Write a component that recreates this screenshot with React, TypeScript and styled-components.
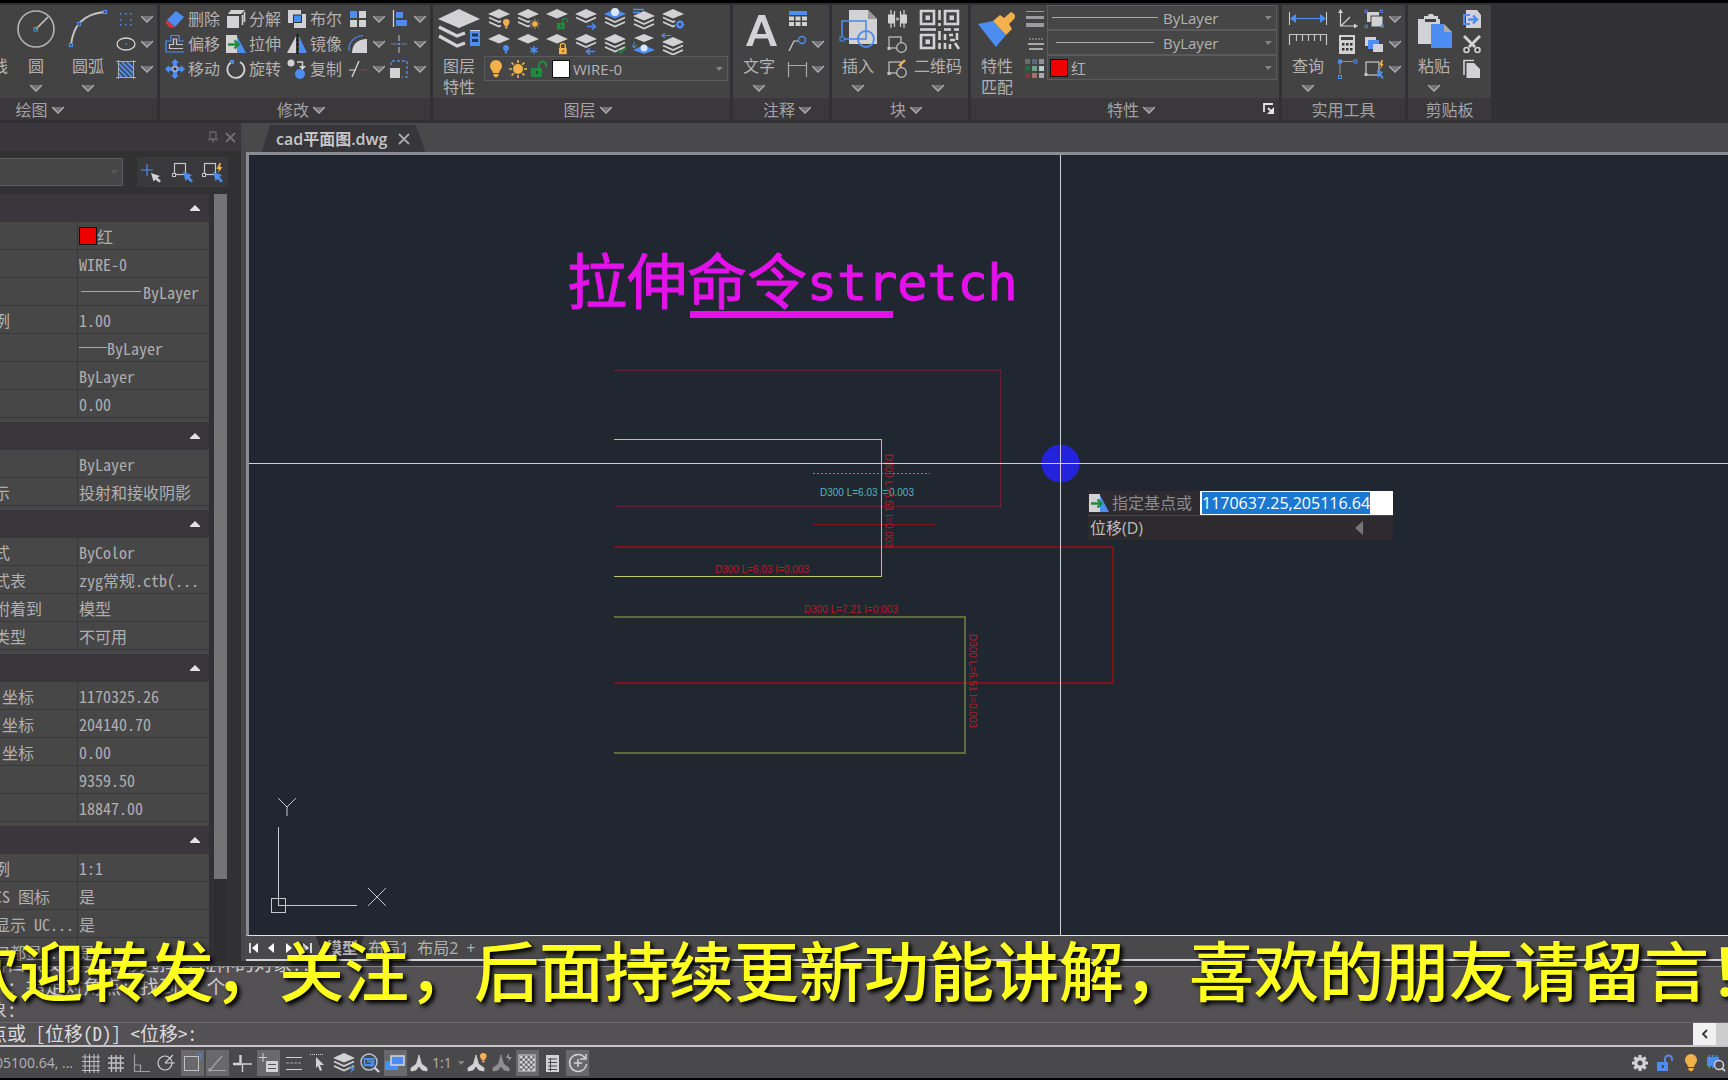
import React, { useEffect, useRef } from "react";
import styled, { createGlobalStyle, css } from "styled-components";

const W = "#d2d1d3";
const B = "#4b8df0";
const O = "#f3b14c";
const G = "#218a3c";
const UI = `"Open Sans", "Noto Sans CJK SC", sans-serif`;
const MONO = `"Noto Sans Mono CJK SC", "Noto Sans CJK SC", monospace`;

const GlobalStyle = createGlobalStyle`
  *, *::before, *::after { box-sizing: border-box; }
  body { margin: 0; background: #000; overflow: hidden; }
  button, select, input { font: inherit; color: inherit; }
`;

const Shell = styled.div`
  position: relative;
  display: flex;
  flex-direction: column;
  height: 100vh;
  overflow: hidden;
  border-top: 3px solid #000;
  border-bottom: 2px solid #000;
  background: #313134;
  color: #b3b2b3;
  font: 16px/20px ${UI};
`;

/* ---------- ribbon ---------- */

const Ribbon = styled.header`
  display: flex;
  gap: 3px;
  padding: 2px 0 3px;
  flex: none;
`;

const Panel = styled.section<{ $w: number; $cut?: number }>`
  display: flex;
  flex-direction: column;
  flex: none;
  width: ${(p) => p.$w}px;
  margin-left: ${(p) => -(p.$cut ?? 0)}px;
  background: #444344;
`;

const PanelBody = styled.div<{ $end?: boolean }>`
  display: flex;
  gap: 2px;
  height: 93px;
  padding: 1px ${(p) => (p.$end ? 4 : 2)}px 0 1px;
  justify-content: ${(p) => (p.$end ? "flex-end" : "flex-start")};
`;

const PanelTitle = styled.footer<{ $plain?: boolean }>`
  display: flex;
  align-items: center;
  justify-content: center;
  gap: 4px;
  height: 22px;
  padding: 2px 0 0 ${(p) => (p.$plain ? 0 : 12)}px;
  background: #3a383b;
  color: #a3a2a4;
  position: relative;
`;

const Launcher = styled.button`
  position: absolute;
  right: 4px;
  top: 5px;
  padding: 0;
  border: 0;
  background: none;
  display: flex;
`;

const bare = css`
  display: flex;
  align-items: center;
  padding: 0;
  border: 0;
  background: none;
  white-space: nowrap;
`;

const BigButton = styled.button`
  ${bare}
  flex: none;
  flex-direction: column;
  width: 50px;
  line-height: 21px;
  & > svg:first-child { margin-bottom: 6px; }
`;

const CaretSlot = styled.span`
  display: flex;
  align-items: center;
  height: 21px;
`;

const Column = styled.div`
  display: grid;
  grid-template-rows: repeat(3, 25px);
  align-content: start;
`;

const ModifyGrid = styled.div`
  display: grid;
  grid-template-columns: 61px 61px 61px 41px 41px;
  grid-template-rows: repeat(3, 25px);
  padding-left: 3px;
`;

const LabelButton = styled.button`
  ${bare}
  gap: 2px;
`;

const SplitButton = styled.button`
  ${bare}
  gap: 4px;
`;

const LayerBlock = styled.div`
  display: flex;
  flex-direction: column;
  flex: 1;
  margin-left: -2px;
`;

const LayerTools = styled.div`
  display: grid;
  grid-template-columns: repeat(7, 29px);
  grid-template-rows: 25px 25px;
  justify-items: center;
`;

const PropertyCombos = styled.div`
  display: flex;
  flex-direction: column;
  flex: 1;
  margin: -1px 0 0 -1px;
`;

const Combo = styled.label`
  display: flex;
  align-items: center;
  gap: 3px;
  height: 25px;
  padding: 0 4px 0 2px;
  border: 1px solid #5b5a5c;
  background: #474647;
`;

const Select = styled.select`
  appearance: none;
  flex: 1;
  min-width: 0;
  padding: 0;
  border: 0;
  background: none;
  outline: 0;
  font-size: 15px;
`;

const Swatch = styled.span<{ $c: string }>`
  flex: none;
  width: 18px;
  height: 18px;
  border: 1px solid #111;
  background: ${(p) => p.$c};
`;

const Rule = styled.span<{ $w: number; $m?: number }>`
  flex: none;
  width: ${(p) => p.$w}px;
  margin: 0 ${(p) => p.$m ?? 0}px;
  border-top: 1px solid #a9a9a9;
`;

/* ---------- palette ---------- */

const Main = styled.main`
  display: flex;
  flex: 1;
  min-height: 0;
`;

const Palette = styled.aside`
  display: flex;
  flex-direction: column;
  flex: none;
  width: 246px;
  border-right: 5px solid #48474a;
  overflow: hidden;
`;

const PaletteTitle = styled.div`
  display: flex;
  flex: none;
  align-items: center;
  justify-content: flex-end;
  gap: 4px;
  height: 28px;
  padding-right: 4px;
  background: #39373b;
`;

const IconButton = styled.button<{ $w?: number }>`
  ${bare}
  justify-content: center;
  width: ${(p) => (p.$w ? `${p.$w}px` : "auto")};
`;

const PaletteHead = styled.div`
  display: flex;
  flex: none;
  align-items: center;
  justify-content: space-between;
  height: 43px;
  padding: 0 13px 2px 0;
`;

const ObjectCombo = styled(Combo)`
  width: 123px;
  height: 28px;
  border-left: 0;
  & > svg { opacity: 0.3; }
`;

const PickTools = styled.div`
  display: flex;
  width: 91px;
  height: 30px;
  background: #39383b;
`;

const PaletteScroll = styled.div`
  display: flex;
  flex: 1;
  min-height: 0;
  gap: 5px;
`;

const Groups = styled.div`
  width: 209px;
  overflow: hidden;
  font: 300 16px/20px ${MONO};
  color: #b0afb0;
`;

const Group = styled.section`
  padding-bottom: 4px;
  background: #484748;
`;

const Track = styled.div`
  width: 13px;
  background: #2d2c2f;
`;

const Thumb = styled.div`
  height: 90%;
  max-height: 685px;
  background: #747376;
`;

const GroupHead = styled.button`
  ${bare}
  justify-content: flex-end;
  width: 209px;
  height: 28px;
  padding-right: 9px;
  background: #39373b;
`;

const PropTable = styled.table`
  width: 267px;
  margin-left: -58px;
  table-layout: fixed;
  border-collapse: separate;
  border-spacing: 0;
`;

const Cell = styled.td<{ $w?: number }>`
  width: ${(p) => (p.$w ? `${p.$w}px` : "auto")};
  height: 28px;
  padding: 0 2px 0 ${(p) => (p.$w ? 3 : 1)}px;
  border-bottom: 1px solid #39383a;
  border-left: 1px solid #39383a;
  overflow: hidden;
  white-space: nowrap;
`;

const Value = styled.span`
  display: flex;
  align-items: center;
`;

/* ---------- document ---------- */

const Doc = styled.section`
  display: flex;
  flex-direction: column;
  flex: 1;
  min-width: 0;
`;

const DocTabs = styled.nav`
  display: flex;
  flex: none;
  height: 29px;
  padding: 2px 0 0 16px;
  background: #49484a;
`;

const DocTab = styled.div`
  display: flex;
  align-items: center;
  gap: 10px;
  padding: 0 8px 0 14px;
  background: #37363a;
  clip-path: polygon(8px 0, calc(100% - 10px) 0, 100% 100%, 0 100%);
  color: #c6c6c8;
  font-weight: 600;
`;

const Canvas = styled.div`
  position: relative;
  flex: 1;
  min-height: 0;
  border: solid #8c8d92;
  border-width: 3px 0 1px 3px;
  border-bottom-color: #e4e4e8;
  background: #202731;
  overflow: hidden;
`;

const Drawing = styled.svg`
  display: block;
  width: 100%;
  height: 100%;
`;

const DynamicInput = styled.div`
  position: absolute;
  left: 839px;
  top: 336px;
  width: 305px;
  background: #2d2b2f;
`;

const PromptRow = styled.label`
  display: flex;
  align-items: center;
  gap: 2px;
  height: 24px;
  color: #8b8a8d;
`;

const PromptText = styled.span`
  flex: 1;
`;

const PointInput = styled.input`
  width: 193px;
  height: 24px;
  padding: 0 1px;
  border: 1px solid #fff;
  background: #fff;
  color: #111;
  outline: 0;
  &::selection { background: #1c77d0; color: #fff; }
`;

const OptionRow = styled.button`
  ${bare}
  justify-content: space-between;
  width: 100%;
  height: 25px;
  padding: 0 30px 0 2px;
  border-top: 1px solid #48464a;
  color: #bcbbbd;
`;

const LayoutTabs = styled.nav`
  display: flex;
  flex: none;
  align-items: center;
  height: 25px;
  border-bottom: 2px solid #d4d4d8;
  background: #49484a;
`;

const LayoutTab = styled.button<{ $on?: boolean }>`
  ${bare}
  height: 23px;
  padding: ${(p) => (p.$on ? "0 6px 0 10px" : "0 4px")};
  background: ${(p) => (p.$on ? "#2d2c30" : "none")};
  clip-path: ${(p) => (p.$on ? "polygon(0 0, 100% 0, calc(100% - 8px) 100%, 8px 100%)" : "none")};
  font-weight: ${(p) => (p.$on ? 700 : 400)};
`;

/* ---------- command line, status ---------- */

const CommandLog = styled.section`
  display: flex;
  flex: none;
  flex-direction: column;
  justify-content: flex-end;
  height: 56px;
  margin-top: 5px;
  padding-bottom: 2px;
  border-top: 1px solid #8a898b;
  background: #535154;
  overflow: hidden;
  font: 300 19px/23px ${MONO};
  color: #cfcecf;
`;

const LogLine = styled.p`
  flex: none;
  margin: 0 0 0 -69px;
  white-space: pre;
`;

const CommandRow = styled.div`
  display: flex;
  flex: none;
  justify-content: space-between;
  height: 25px;
  border-top: 1px solid #6a686b;
  border-bottom: 2px solid #c6c5c8;
  background: #535154;
  overflow: hidden;
  font: 400 19px/20px ${MONO};
  color: #dcdbdc;
`;

const ScrollEnd = styled.div`
  display: flex;
  width: 35px;
  background: #cdcdcd;
`;

const ScrollButton = styled.button`
  ${bare}
  justify-content: center;
  width: 23px;
  background: #f1f1f1;
`;

const StatusBar = styled.footer`
  display: flex;
  flex: none;
  align-items: center;
  height: 31px;
  background: #49484a;
  overflow: hidden;
`;

const Coordinates = styled.span`
  display: flex;
  flex: none;
  justify-content: flex-end;
  width: 73px;
  margin-right: 6px;
  font-size: 14px;
  white-space: nowrap;
`;

const ToggleGroup = styled.div<{ $w: number }>`
  display: flex;
  flex: none;
  justify-content: space-between;
  width: ${(p) => p.$w}px;
`;

const Toggle = styled.button<{ $on?: boolean }>`
  ${bare}
  justify-content: center;
  width: 23px;
  height: 26px;
  background: ${(p) => (p.$on ? "#69686b" : "none")};
`;

const ScaleButton = styled.button`
  ${bare}
  gap: 5px;
  width: 33px;
  font-size: 14px;
`;

const StatusRight = styled.div`
  display: flex;
  justify-content: space-between;
  width: 100px;
  margin-left: auto;
`;

const Caption = styled.div`
  position: absolute;
  left: 0;
  right: 0;
  bottom: 65px;
  display: flex;
  justify-content: center;
  color: #ffff20;
  font: 500 65px/90px "Noto Sans CJK SC", sans-serif;
  text-shadow: 3px 3px 4px #000, 1px 1px 2px #222200;
  white-space: nowrap;
  pointer-events: none;
`;

/* ---------- icons ---------- */

type IcoProps = { w?: number; h?: number; children: React.ReactNode };
const IcoSvg = styled.svg`
  flex-shrink: 0;
`;
const Ico = ({ w = 22, h = 22, children }: IcoProps) => (
  <IcoSvg width={w} height={h} viewBox={`0 0 ${w} ${h}`} fill="none" stroke="none" aria-hidden="true">
    {children}
  </IcoSvg>
);

const Caret = () => (
  <Ico w={12} h={8}>
    <path d="M1 1H11L6 7Z" fill="#737274" />
    <path d="M0 1L6 7L12 1" stroke="#aeadaf" strokeWidth="1.3" />
  </Ico>
);

const MiniCaret = () => (
  <Ico w={8} h={5}>
    <path d="M1 1H8L4 5Z" fill="#858487" />
  </Ico>
);

const Bulb = ({ x, y, s = 1, c = O }: { x: number; y: number; s?: number; c?: string }) => (
  <g transform={`translate(${x} ${y}) scale(${s})`} fill={c}>
    <path d="M6 0a6 6 0 0 1 6 6c0 3-2.500 4-3 7H3C2.500 10 0 9 0 6a6 6 0 0 1 6-6Z" />
    <path d="M3.500 14h5v2l-2.500 1.500L3.500 16Z" />
  </g>
);

const Sun = ({ x, y, s = 1, c = O }: { x: number; y: number; s?: number; c?: string }) => (
  <g transform={`translate(${x} ${y}) scale(${s})`}>
    <circle cx="9" cy="9" r="5" fill={c} />
    <path d="M9 0v3M9 15v3M0 9h3M15 9h3M2.600 2.600l2.200 2.200M13.200 13.200l2.200 2.200M15.400 2.600l-2.200 2.200M4.800 13.200l-2.200 2.200" stroke={c} strokeWidth="1.600" />
  </g>
);

const Lock = ({ x, y, s = 1, c = G, open = true }: { x: number; y: number; s?: number; c?: string; open?: boolean }) => (
  <g transform={`translate(${x} ${y}) scale(${s})`}>
    <rect x="0" y="7" width="11" height="9" fill={c} />
    <path d={open ? "M8 7V4a3.500 3.500 0 0 1 7 0v2" : "M2 7V4a3.500 3.500 0 0 1 7 0v3"} stroke={c} strokeWidth="2" fill="none" />
    <rect x="5" y="10" width="1.500" height="3" fill="#333" />
  </g>
);

const Layers = ({ n = 2, top = W, dy = 0, children }: { n?: number; top?: string; dy?: number; children?: React.ReactNode }) => (
  <Ico w={24} h={22}>
    <g transform={`translate(0 ${dy})`}>
      <path d="M12 1L23 6L12 10.500L1 6Z" fill={top} />
      {n > 0 && <path d="M2 9.500L12 14L22 9.500" stroke={W} strokeWidth="1.800" />}
      {n > 1 && <path d="M2 14L12 18.500L22 14" stroke={W} strokeWidth="1.800" />}
    </g>
    {children}
  </Ico>
);

const HalfLayers = ({ children }: { children: React.ReactNode }) => (
  <Ico w={24} h={22}>
    <path d="M12 1L23 6L12 10.500L1 6Z" fill={W} />
    <path d="M2 9.500L12 14L14 13M2 14L12 18.500L14 17.500" stroke={W} strokeWidth="1.800" />
    {children}
  </Ico>
);

const CircleIcon = () => (
  <Ico w={44} h={44}>
    <circle cx="22" cy="23" r="18" stroke="#b5b4b6" strokeWidth="1.600" />
    <path d="M22 23L34 11" stroke="#c5c4c6" strokeWidth="1.600" />
    <rect x="20" y="21.500" width="3.500" height="3.500" stroke={B} />
  </Ico>
);

const ArcIcon = () => (
  <Ico w={44} h={44}>
    <path d="M5 39Q8 9 38 6" stroke="#c5c4c6" strokeWidth="1.800" />
    <g stroke={B} strokeWidth="1.200" fill="#444344">
      <rect x="3.500" y="37.500" width="3" height="3" />
      <rect x="11.500" y="16.500" width="3" height="3" />
      <rect x="37.500" y="4.500" width="3" height="3" />
    </g>
  </Ico>
);

const PolylineIcon = () => (
  <Ico w={44} h={44}>
    <path d="M4 9H23A14 14 0 0 1 23 37" stroke="#b5b4b6" strokeWidth="1.600" />
  </Ico>
);

const PointsIcon = () => (
  <Ico>
    <g fill={B}>
      {[5, 10, 15].map((x) => [5, 16].map((y) => <rect key={`${x}-${y}`} x={x} y={y} width="1.500" height="1.500" />))}
      <rect x="5" y="11" width="1.500" height="1.500" />
      <rect x="15" y="11" width="1.500" height="1.500" />
    </g>
  </Ico>
);

const EllipseIcon = () => (
  <Ico>
    <ellipse cx="11" cy="11" rx="9" ry="6" stroke={W} strokeWidth="1.300" />
    <rect x="10.500" y="10" width="1.500" height="1.500" fill={B} />
  </Ico>
);

const HatchIcon = () => (
  <Ico>
    <path d="M3 10L12 19M3 5L17 19M7 4L19 16M12 4L19 11M3 15L7 19" stroke={B} strokeWidth="2" />
    <path d="M1 3.500H21M1 19.500H21M3.500 2V21M18.500 2V21" stroke="#aaa" strokeWidth="1" />
  </Ico>
);

const EraseIcon = () => (
  <Ico>
    <path d="M3 12L12 3L20 9L11 19Z" fill={B} />
    <path d="M3 12L1.500 15L6 20L11 19Z" fill="#d3324b" />
  </Ico>
);

const BoxIcon = () => (
  <Ico>
    <path d="M2 8H14V20H2ZM6 2H20L16 6H3Z" fill={W} />
    <path d="M17.500 7V17M19.500 4V14" stroke={W} strokeWidth="1.600" />
  </Ico>
);

const UnionIcon = () => (
  <Ico>
    <path d="M2 2H15V6H20V20H8V15H2Z" fill={W} />
    <rect x="7.500" y="7" width="8" height="7.500" fill={B} stroke="#333" />
  </Ico>
);

const ArrayIcon = () => (
  <Ico>
    <path d="M3 3h7v7H3Z" fill={B} />
    <path d="M12 3h7v7h-7ZM12 12h7v7h-7ZM3 12h7v7H3Z" fill={W} />
  </Ico>
);

const AlignIcon = () => (
  <Ico>
    <path d="M5.500 2V19" stroke={W} strokeWidth="1.300" />
    <path d="M8 4h7v6H8ZM8 12h11v6H8Z" fill={B} />
  </Ico>
);

const OffsetIcon = () => (
  <Ico>
    <path d="M20 19H2V8H7V2.500H15V8H20" stroke={B} strokeWidth="1.200" />
    <path d="M19 15.500H5.500V11.500H9.500V6H12.500V11.500H19" stroke="#c9c8ca" strokeWidth="1.200" />
  </Ico>
);

const StretchIcon = () => (
  <Ico>
    <path d="M1 2H12V20H1Z" fill={W} />
    <path d="M12 3L21 20H12Z" fill={B} />
    <path d="M3 11.500H12M9.500 7.500L13.500 11.500L9.500 15.500" stroke={G} strokeWidth="2.400" />
  </Ico>
);

const MirrorIcon = () => (
  <Ico>
    <path d="M10 3V20H1Z" fill={W} />
    <path d="M13 3V20H21Z" fill={B} />
    <path d="M11.500 1V21" stroke="#111" strokeWidth="1.400" strokeDasharray="3 1.500" />
  </Ico>
);

const FilletIcon = () => (
  <Ico>
    <path d="M5 20C5 11 11 6 20 6V20Z" fill={W} />
    <path d="M2 18C1 9 8 3 16 2.500" stroke={B} strokeWidth="1.200" />
  </Ico>
);

const BreakIcon = () => (
  <Ico>
    <path d="M11 2V8M11 14V20" stroke="#9a9ea8" strokeWidth="1.400" />
    <path d="M3 11H9M13 11H19" stroke="#6a7d9f" strokeWidth="1" />
    <circle cx="11" cy="11" r="1.300" fill={B} />
  </Ico>
);

const MoveIcon = () => (
  <Ico>
    <path d="M11 1L15 5H13V9H17V7L21 11L17 15V13H13V17H15L11 21L7 17H9V13H5V15L1 11L5 7V9H9V5H7Z" fill={B} />
    <rect x="9" y="9" width="4" height="4" fill="#333" stroke={W} />
  </Ico>
);

const RotateIcon = () => (
  <Ico>
    <path d="M15 4A8.500 8.500 0 1 1 6 4.500" stroke={W} strokeWidth="1.800" />
    <path d="M4 2H9V7Z" fill={B} />
  </Ico>
);

const CopyIcon = () => (
  <Ico>
    <circle cx="5" cy="5" r="3.500" fill={W} />
    <path d="M11 4H16.500V9" stroke={W} strokeWidth="1.400" />
    <circle cx="14" cy="16" r="5" fill={B} />
    <path d="M13 8H20L16.500 12Z" fill={W} />
  </Ico>
);

const TrimIcon = () => (
  <Ico>
    <path d="M5 19L12 3" stroke={W} strokeWidth="1.400" />
    <path d="M2 12H9" stroke={W} />
    <path d="M12 12H20" stroke="#7a4a4e" />
  </Ico>
);

const ScaleIcon = () => (
  <Ico>
    <rect x="2" y="10" width="10" height="10" fill={W} />
    <path d="M3 7V3H19V19H14" stroke={B} strokeWidth="1.400" strokeDasharray="3 2" />
  </Ico>
);

const BigLayersIcon = () => (
  <Ico w={44} h={44}>
    <path d="M22 3L43 13L22 22L1 13Z" fill={W} />
    <path d="M2 21L20 30L28 27M2 30L20 40L28 37" stroke={W} strokeWidth="3.400" />
    <rect x="33" y="24" width="10" height="16" fill={B} />
    <path d="M35 29h6M35 34.500h6" stroke="#22345a" strokeWidth="3" />
    <path d="M33 24.500h10" stroke={W} />
  </Ico>
);

const TextIcon = () => (
  <Ico w={44} h={44}>
    <path fillRule="evenodd" d="M21.500 9H28L40 40H33.500L30.900 32.500H18L15.400 40H9ZM24.500 15.500L19.800 28H29.200Z" fill={W} />
  </Ico>
);

const TableIcon = () => (
  <Ico>
    <rect x="2" y="3" width="18" height="4" fill={B} />
    <path d="M2 8.500h5v4H2ZM8.500 8.500h5v4h-5ZM15 8.500h5v4h-5ZM2 14h5v4H2ZM8.500 14h5v4h-5ZM15 14h5v4h-5Z" fill={W} />
  </Ico>
);

const LeaderIcon = () => (
  <Ico>
    <path d="M3 18L8 8H13" stroke={W} strokeWidth="1.200" />
    <circle cx="16" cy="7" r="3.500" stroke={B} strokeWidth="1.400" />
  </Ico>
);

const DimIcon = () => (
  <Ico>
    <path d="M2.500 4V19M20.500 4V19M3 7.500H20" stroke="#a9a8aa" strokeWidth="1.200" />
  </Ico>
);

const InsertIcon = () => (
  <Ico w={44} h={44}>
    <path d="M13 4H32L41 13V38H13Z" fill={W} />
    <path d="M32 4V13H41Z" fill="#9a999b" />
    <rect x="6" y="15" width="24" height="18" stroke={B} strokeWidth="1.600" />
    <circle cx="30" cy="33" r="8" stroke={B} strokeWidth="1.800" />
    <rect x="4" y="31" width="4" height="4" fill="#444" stroke={B} />
  </Ico>
);

const BlockFlipIcon = () => (
  <Ico>
    <path d="M1 6.500h6v9H1ZM14 6.500h6v9h-6Z" fill={W} />
    <path d="M4 2V20M17 2V20M7.500 3V19M13.500 3V19" stroke={W} strokeWidth="1.200" />
    <path d="M9.500 9L12.500 11L9.500 13Z" fill={W} />
  </Ico>
);

const BlockIcon = ({ edit }: { edit?: boolean }) => (
  <Ico>
    <rect x="2" y="4" width="12" height="11" stroke="#c4c3c5" strokeWidth="1.200" />
    <circle cx="14.500" cy="14.500" r="4.800" stroke="#c4c3c5" strokeWidth="1.200" fill="#444344" />
    <rect x=".5" y="14" width="3" height="3" fill="#c4c3c5" />
    {edit && <path d="M12 8L18 2" stroke={O} strokeWidth="2.400" />}
  </Ico>
);

const QrIcon = () => (
  <Ico w={44} h={44}>
    <path d="M5 5h13v13H5ZM29 5h13v13H29ZM5 29h13v13H5Z" stroke={W} strokeWidth="2.600" />
    <path d="M9.500 9.500h4.500v4.500H9.500ZM33.500 9.500h4.500v4.500h-4.500ZM9.500 33.500h4.500v4.500H9.500Z" fill={W} />
    <path d="M23.500 4V14M23.500 17v3M4 23.500H20M23.500 25v9M23.500 37v6M28 23.500h7M38 23.500h5M29 28v6M33 29h4M41 27v7M34 34h5M29 37v6M34 38v5M39 37l4 6" stroke={W} strokeWidth="2.600" />
  </Ico>
);

const BrushIcon = () => (
  <Ico w={44} h={44}>
    <path d="M3 18L18 15L31 29L21 41Z" fill={B} />
    <path d="M18 15L25 9L29 12L36 6C40 8 41 10 39 13L34 18L37 23L31 29Z" fill={O} />
  </Ico>
);

const WeightIcon = () => (
  <Ico>
    <path d="M2 3.500H20" stroke="#9b9a9c" />
    <path d="M2 9.500H20" stroke="#9b9a9c" strokeWidth="3" />
    <path d="M2 17H20" stroke="#9b9a9c" strokeWidth="4" />
  </Ico>
);

const LinetypeIcon = () => (
  <Ico>
    <path d="M5 6H19" stroke="#a9a8aa" strokeDasharray="2 1" />
    <path d="M4 11H20M5 16H19" stroke="#a9a8aa" strokeWidth="2" />
  </Ico>
);

const ColorsIcon = () => (
  <Ico>
    {["#6b6b70", "#566a7d", "#8f9296", "#286a43", "#67a489", "#b7cfc8", "#7c3a40", "#a5716f", "#a8a7a9"].map((c, i) => (
      <rect key={i} x={1 + (i % 3) * 7} y={1 + Math.floor(i / 3) * 7} width="5" height="5" fill={c} />
    ))}
  </Ico>
);

const MeasureIcon = () => (
  <Ico w={44} h={44}>
    <path d="M3.500 6V19M40.500 6V19" stroke={W} />
    <path d="M6 12.500H38" stroke={B} strokeWidth="1.200" />
    <path d="M4 12.500L10 8V17ZM40 12.500L34 8V17Z" fill={B} />
    <path d="M3.500 39V28.500H40.500V39M10.500 28V35M16.500 28V35M22.500 28V35M28.500 28V35M34.500 28V35" stroke="#c4c3c5" strokeWidth="1.200" />
  </Ico>
);

const AxesIcon = () => (
  <Ico>
    <path d="M3.500 5V18H17M4 18L13 9" stroke={W} strokeWidth="1.200" />
    <path d="M3.500 1L6 5H1ZM21 18L17 15.500V20.500Z" fill={W} />
  </Ico>
);

const CalcIcon = () => (
  <Ico>
    <path fillRule="evenodd" d="M2 2H18V21H2ZM4 4V7H16V4Z" fill={W} />
    <path d="M5 10h2.500v2.500H5ZM9 10h2.500v2.500H9ZM13 10h2.500v2.500H13ZM5 15h2.500v2.500H5ZM9 15h2.500v2.500H9ZM13 15h2.500v2.500H13Z" fill="#333" />
  </Ico>
);

const ElbowIcon = () => (
  <Ico>
    <path d="M3 16V3.500H16" stroke="#8e8d90" />
    <rect x="1" y="1.500" width="4" height="4" fill={B} />
    <rect x="1.500" y="17.500" width="3" height="3" stroke={B} />
    <rect x="17" y="2" width="3" height="3" stroke={B} />
  </Ico>
);

const GroupIcon = () => (
  <Ico>
    <rect x="4" y="4" width="12" height="10" fill={W} />
    <rect x="8" y="8" width="12" height="11" fill={W} stroke="#444344" />
    <path d="M2 2h2.500v2.500H2ZM17 2h2.500v2.500H17ZM2 17h2.500v2.500H2ZM18 17h2.500v2.500H18Z" stroke={B} strokeWidth=".8" />
  </Ico>
);

const OrderIcon = () => (
  <Ico>
    <rect x="2" y="4" width="11" height="9" fill={W} />
    <rect x="5" y="7" width="11" height="9" fill={B} />
    <rect x="10" y="11" width="10" height="8" fill={W} />
  </Ico>
);

const FilterPickIcon = () => (
  <Ico>
    <rect x="3" y="4" width="13" height="13" stroke="#c6c5c7" strokeWidth="1.200" />
    <rect x="1.500" y="15" width="3" height="3" fill="#c6c5c7" />
    <path d="M14 12L20 14L18.500 16L20.500 20L19 21L17 18L15 20Z" fill={B} />
    <path d="M18.500 2L16.500 7H18L17.500 11L20.500 6H19L20 2Z" fill={O} />
  </Ico>
);

const QuickPickIcon = ({ bolt = true }: { bolt?: boolean }) => (
  <Ico>
    <rect x="3.500" y="2.500" width="11" height="11" stroke="#c6c5c7" strokeWidth="1.200" />
    <rect x="1.500" y="12.500" width="3" height="3" stroke="#c6c5c7" fill="#39383b" />
    <path d="M12 11L21 14L18.500 16L22 20L20 21.500L16.500 18L14.500 20Z" fill={B} />
    {bolt && <path d="M18.500 2L15.500 8H18L17 12L21.500 6H19L20 2Z" fill={O} />}
  </Ico>
);

const CrossPickIcon = () => (
  <Ico>
    <path d="M6 3V15M0 9H12" stroke={B} strokeWidth="1.200" />
    <path d="M10 12L19 15L16.500 16.500L20 20L18 21.500L14.500 18.500L12.500 20.500Z" fill={W} />
  </Ico>
);

const PasteIcon = () => (
  <Ico w={44} h={44}>
    <path d="M6 13H13V16H24V13H28V38H6Z" fill={W} />
    <path d="M12 10H16C16 7 22 7 22 10H26V13H12Z" fill={W} />
    <path d="M19 18H32L40 26V42H19Z" fill={B} />
    <path d="M32 18L40 26H32Z" fill="#aaa" />
  </Ico>
);

const CutoutIcon = () => (
  <Ico>
    <path d="M3 2H14L18 7V20H3Z" fill={W} />
    <path d="M0 7H7M0 16H7M1 7V16" stroke={B} strokeWidth="2" />
    <path d="M5 11.500H13M10 7.500L14 11.500L10 15.500" stroke={B} strokeWidth="2.400" />
  </Ico>
);

const ScissorsIcon = () => (
  <Ico>
    <path d="M1 3L12 14M17 3L6 14" stroke={W} strokeWidth="3" />
    <circle cx="3.500" cy="17" r="2.500" stroke={W} strokeWidth="1.600" />
    <circle cx="14.500" cy="17" r="2.500" stroke={W} strokeWidth="1.600" />
  </Ico>
);

const PagesIcon = () => (
  <Ico>
    <path d="M1 17V2.500H11" stroke={W} strokeWidth="1.600" />
    <path d="M3.500 5H11L17 11V20H3.500Z" fill={W} />
  </Ico>
);

const Gear = () => (
  <Ico w={18} h={18}>
    <path d="M9 1v16M1 9h16M3.400 3.400l11.200 11.200M14.600 3.400L3.400 14.600" stroke={W} strokeWidth="3.200" />
    <circle cx="9" cy="9" r="6" fill={W} />
    <circle cx="9" cy="9" r="2.500" fill="#49484a" />
  </Ico>
);

const Person = ({ c = W }: { c?: string }) => (
  <path d="M10 3L12.500 12L18 16V19L13 18L10 14L7 18L2 19V16L7.500 12Z" fill={c} stroke={c} strokeWidth=".8" />
);

/* ---------- content ---------- */

const layerTools: [string, React.ReactNode][] = [
  ["关闭图层", <HalfLayers><Bulb x={16} y={11} s={0.55} /></HalfLayers>],
  ["冻结图层", <HalfLayers><Sun x={14} y={11} s={0.55} /></HalfLayers>],
  ["解锁图层", <Layers n={0}><Lock x={12} y={10} s={0.7} /></Layers>],
  ["匹配图层", <Layers n={1}><path d="M13 18.500H21M18 15.500L21.500 18.500L18 21.500" stroke={B} strokeWidth="1.600" /></Layers>],
  ["置为当前", <Layers top={B}><circle cx="12" cy="4" r="4" fill="#dbe8fb" /></Layers>],
  ["图层状态", <Layers dy={2}><path d="M1 1.500H12M1 4.500H8" stroke={B} strokeWidth="1.400" /></Layers>],
  ["图层设置", <HalfLayers><circle cx="19" cy="16.500" r="2.700" stroke={B} strokeWidth="2" /><path d="M19 12v9M14.500 16.500h9M16 13.500l6 6M22 13.500l-6 6" stroke={B} strokeWidth="1.200" /><circle cx="19" cy="16.500" r="1.400" fill="#444344" /></HalfLayers>],
  ["打开图层", <Layers n={0}><Bulb x={16} y={12} s={0.5} c={B} /></Layers>],
  ["解冻图层", <Layers n={0}><path d="M18 13v8M14.500 15l7 4M21.500 15l-7 4" stroke={B} strokeWidth="1.500" /></Layers>],
  ["锁定图层", <Layers n={0}><Lock x={14} y={10} s={0.7} c={O} open={false} /></Layers>],
  ["上一图层", <Layers n={1}><path d="M13 18.500H21M16 15.500L12.500 18.500L16 21.500" stroke={B} strokeWidth="1.600" /></Layers>],
  ["图层漫游", <Layers><path d="M15 17L18 20L23 14" stroke={G} strokeWidth="1.600" /></Layers>],
  ["更改图层", <Ico w={24} h={22}><path d="M12 1L22 5L12 9L2 5Z" fill={W} /><path d="M12 12L23 17L12 21L1 17Z" fill={B} /><circle cx="12" cy="15" r="3.500" fill="#dbe8fb" /><path d="M2 9V14M0 12L2 15L5 12" stroke={B} /></Ico>],
  ["合并图层", <Layers dy={3}><path d="M1 2.500H10M4 0L1 2.500L4 5" stroke={B} strokeWidth="1.200" /></Layers>],
];

type Row = [string, React.ReactNode];
const groups: [string, Row[]][] = [
  ["常规", [
    ["颜色", <Value><Swatch $c="#ee0000" />红</Value>],
    ["图层", "WIRE-0"],
    ["线型", <Value><Rule $w={60} $m={2} />ByLayer</Value>],
    ["线型比例", "1.00"],
    ["线宽", <Value><Rule $w={28} />ByLayer</Value>],
    ["透明度", "ByLayer"],
    ["厚度", "0.00"],
  ]],
  ["三维效果", [["材质", "ByLayer"], ["阴影显示", "投射和接收阴影"]]],
  ["打印样式", [["打印样式", "ByColor"], ["打印样式表", "zyg常规.ctb(..."], ["打印表附着到", "模型"], ["打印表类型", "不可用"]]],
  ["视图", [["圆心 X 坐标", "1170325.26"], ["圆心 Y 坐标", "204140.70"], ["圆心 Z 坐标", "0.00"], ["高度", "9359.50"], ["宽度", "18847.00"]]],
  ["其他", [["注释比例", "1:1"], ["打开 UCS 图标", "是"], ["在原点显示 UC...", "是"], ["每个视口都显...", "是"]]],
];

const Split = ({ label, children }: { label: string; children: React.ReactNode }) => (
  <SplitButton aria-label={label}>{children}<Caret /></SplitButton>
);

const Big = ({ icon, label, second }: { icon: React.ReactNode; label: string; second?: string }) => (
  <BigButton>
    {icon}
    <span>{label}</span>
    {second ? <span>{second}</span> : <CaretSlot><Caret /></CaretSlot>}
  </BigButton>
);

function RibbonBar() {
  return (
    <Ribbon>
      <Panel $w={247} $cut={90}>
        <PanelBody $end>
          <Big icon={<PolylineIcon />} label="多段线" />
          <Big icon={<CircleIcon />} label="圆" />
          <Big icon={<ArcIcon />} label="圆弧" />
          <Column>
            <Split label="点"><PointsIcon /></Split>
            <Split label="椭圆"><EllipseIcon /></Split>
            <Split label="填充"><HatchIcon /></Split>
          </Column>
        </PanelBody>
        <PanelTitle>绘图<Caret /></PanelTitle>
      </Panel>

      <Panel $w={270}>
        <PanelBody>
          <ModifyGrid>
            <LabelButton><EraseIcon />删除</LabelButton>
            <LabelButton><BoxIcon />分解</LabelButton>
            <LabelButton><UnionIcon />布尔</LabelButton>
            <Split label="阵列"><ArrayIcon /></Split>
            <Split label="对齐"><AlignIcon /></Split>
            <LabelButton><OffsetIcon />偏移</LabelButton>
            <LabelButton><StretchIcon />拉伸</LabelButton>
            <LabelButton><MirrorIcon />镜像</LabelButton>
            <Split label="圆角"><FilletIcon /></Split>
            <Split label="打断"><BreakIcon /></Split>
            <LabelButton><MoveIcon />移动</LabelButton>
            <LabelButton><RotateIcon />旋转</LabelButton>
            <LabelButton><CopyIcon />复制</LabelButton>
            <Split label="修剪"><TrimIcon /></Split>
            <Split label="缩放"><ScaleIcon /></Split>
          </ModifyGrid>
        </PanelBody>
        <PanelTitle>修改<Caret /></PanelTitle>
      </Panel>

      <Panel $w={297}>
        <PanelBody>
          <Big icon={<BigLayersIcon />} label="图层" second="特性" />
          <LayerBlock>
            <LayerTools>
              {layerTools.map(([name, icon]) => <IconButton key={name} aria-label={name}>{icon}</IconButton>)}
            </LayerTools>
            <Combo>
              <Ico w={62} h={20}>
                <Bulb x={3} y={1} />
                <Sun x={22} y={1} />
                <Lock x={44} y={2} />
              </Ico>
              <Swatch $c="#fff" />
              <Select aria-label="当前图层"><option>WIRE-0</option></Select>
              <MiniCaret />
            </Combo>
          </LayerBlock>
        </PanelBody>
        <PanelTitle>图层<Caret /></PanelTitle>
      </Panel>

      <Panel $w={96}>
        <PanelBody>
          <Big icon={<TextIcon />} label="文字" />
          <Column>
            <IconButton $w={24} aria-label="表格"><TableIcon /></IconButton>
            <Split label="引线"><LeaderIcon /></Split>
            <Split label="标注"><DimIcon /></Split>
          </Column>
        </PanelBody>
        <PanelTitle>注释<Caret /></PanelTitle>
      </Panel>

      <Panel $w={136}>
        <PanelBody>
          <Big icon={<InsertIcon />} label="插入" />
          <Column>
            <IconButton $w={26} aria-label="块属性"><BlockFlipIcon /></IconButton>
            <IconButton $w={26} aria-label="创建块"><BlockIcon /></IconButton>
            <IconButton $w={26} aria-label="编辑块"><BlockIcon edit /></IconButton>
          </Column>
          <Big icon={<QrIcon />} label="二维码" />
        </PanelBody>
        <PanelTitle>块<Caret /></PanelTitle>
      </Panel>

      <Panel $w={308}>
        <PanelBody>
          <Big icon={<BrushIcon />} label="特性" second="匹配" />
          <Column>
            <IconButton aria-label="线宽"><WeightIcon /></IconButton>
            <IconButton aria-label="线型"><LinetypeIcon /></IconButton>
            <IconButton aria-label="颜色"><ColorsIcon /></IconButton>
          </Column>
          <PropertyCombos>
            <Combo><Rule $w={106} $m={2} /><Select aria-label="线宽"><option>ByLayer</option></Select><MiniCaret /></Combo>
            <Combo><Rule $w={98} $m={6} /><Select aria-label="线型"><option>ByLayer</option></Select><MiniCaret /></Combo>
            <Combo><Swatch $c="#ee0000" /><Select aria-label="颜色"><option>红</option></Select><MiniCaret /></Combo>
          </PropertyCombos>
        </PanelBody>
        <PanelTitle>
          特性<Caret />
          <Launcher aria-label="特性选项板">
            <Ico w={12} h={12}><path d="M1 9V1H10M5 5L9 9" stroke="#e4e4e4" strokeWidth="1.800" /><path d="M11 4V11H4Z" fill="#e4e4e4" /></Ico>
          </Launcher>
        </PanelTitle>
      </Panel>

      <Panel $w={123}>
        <PanelBody>
          <Big icon={<MeasureIcon />} label="查询" />
          <Column>
            <IconButton $w={26} aria-label="坐标"><AxesIcon /></IconButton>
            <IconButton $w={26} aria-label="计算器"><CalcIcon /></IconButton>
            <IconButton $w={26} aria-label="节点"><ElbowIcon /></IconButton>
          </Column>
          <Column>
            <Split label="组"><GroupIcon /></Split>
            <Split label="绘图次序"><OrderIcon /></Split>
            <Split label="快速选择"><FilterPickIcon /></Split>
          </Column>
        </PanelBody>
        <PanelTitle $plain>实用工具</PanelTitle>
      </Panel>

      <Panel $w={83}>
        <PanelBody>
          <Big icon={<PasteIcon />} label="粘贴" />
          <Column>
            <IconButton $w={26} aria-label="带基点复制"><CutoutIcon /></IconButton>
            <IconButton $w={26} aria-label="剪切"><ScissorsIcon /></IconButton>
            <IconButton $w={26} aria-label="复制"><PagesIcon /></IconButton>
          </Column>
        </PanelBody>
        <PanelTitle $plain>剪贴板</PanelTitle>
      </Panel>
    </Ribbon>
  );
}

function PropertiesPalette() {
  return (
    <Palette>
      <PaletteTitle>
        <IconButton aria-label="固定"><Ico w={12} h={14}><path d="M3 2H9V9H3ZM1 9.500H11M6 10V13" stroke="#67666a" strokeWidth="1.300" /></Ico></IconButton>
        <IconButton aria-label="关闭"><Ico w={14} h={14}><path d="M3 3L12 12M12 3L3 12" stroke="#706f73" strokeWidth="1.800" /></Ico></IconButton>
      </PaletteTitle>
      <PaletteHead>
        <ObjectCombo><Select aria-label="对象"><option></option></Select><MiniCaret /></ObjectCombo>
        <PickTools>
          <IconButton $w={30} aria-label="切换拾取"><CrossPickIcon /></IconButton>
          <IconButton $w={30} aria-label="选择对象"><QuickPickIcon bolt={false} /></IconButton>
          <IconButton $w={30} aria-label="快速选择"><QuickPickIcon /></IconButton>
        </PickTools>
      </PaletteHead>
      <PaletteScroll>
        <Groups>
          {groups.map(([name, rows]) => (
            <Group key={name}>
              <GroupHead aria-label={name}><Ico w={10} h={6}><path d="M5 0L10 5V6H0V5Z" fill="#e2e1e4" /></Ico></GroupHead>
              <PropTable>
                <tbody>
                  {rows.map(([k, v]) => (
                    <tr key={k}><Cell $w={135}>{k}</Cell><Cell>{v}</Cell></tr>
                  ))}
                </tbody>
              </PropTable>
            </Group>
          ))}
        </Groups>
        <Track><Thumb /></Track>
      </PaletteScroll>
    </Palette>
  );
}

const Note = styled.text`
  font: 10px "Liberation Sans", sans-serif;
`;

function ModelSpace() {
  const input = useRef<HTMLInputElement>(null);
  useEffect(() => {
    input.current?.focus();
    input.current?.select();
  }, []);
  return (
    <Canvas>
      <Drawing shapeRendering="crispEdges" fill="none">
        <g fill="#e412ea" stroke="#e412ea">
          <text x="318" y="149" fontFamily="Noto Sans CJK SC, sans-serif" fontSize="60">拉伸命令</text>
          <text x="558" y="145" fontFamily="DejaVu Sans Mono, monospace" fontSize="50">stretch</text>
          <rect x="441" y="156" width="203" height="7" stroke="none" />
        </g>
        <path d="M365 215.500H751.500V351.500H365" stroke="#7c2531" strokeDasharray="3 1" />
        <path d="M365 392H864V528H365" stroke="#7b131c" strokeWidth="2" />
        <path d="M564 369.500H686" stroke="#86141e" />
        <path d="M365 284.500H632.500V421.500H365" stroke="#c2c765" />
        <path d="M365 462H716V598H365" stroke="#5f6b3a" strokeWidth="2" />
        <path d="M564 318.500H681" stroke="#4f9aa3" strokeDasharray="2 2" />
        <Note x="571" y="341" fill="#4fb9bd">D300 L=6.03 I=0.003</Note>
        <g fill="#b81a26">
          <Note x="466" y="418">D300 L=6.03 I=0.003</Note>
          <Note x="555" y="458">D300 L=7.21 I=0.003</Note>
          <Note transform="translate(636 299) rotate(90)">D300 L=6.51 I=0.003</Note>
          <Note transform="translate(720 479) rotate(90)">D300 L=6.51 I=0.003</Note>
        </g>
        <circle cx="811.500" cy="308.500" r="19" fill="#2323dc" shapeRendering="auto" />
        <path d="M811.500 0V2000M0 308.500H4000" stroke="#ced0d4" />
        <g stroke="#c6c9ce">
          <path d="M29.500 672V750.500H108M22.500 743.500H36.500V757.500H22.500Z" />
          <path d="M29 643L38 652L47 643M38 652V661M119 733L137 751M137 733L119 751" shapeRendering="auto" />
        </g>
      </Drawing>
      <DynamicInput>
        <PromptRow>
          <StretchIcon />
          <PromptText>指定基点或</PromptText>
          <PointInput ref={input} defaultValue="1170637.25,205116.64" />
        </PromptRow>
        <OptionRow>
          位移(D)
          <Ico w={8} h={14}><path d="M8 0V14L0 7Z" fill="#77757a" /></Ico>
        </OptionRow>
      </DynamicInput>
    </Canvas>
  );
}

const toggles: [string, boolean, React.ReactNode][] = [
  ["捕捉", false, <Ico><path d="M2 5H20M2 9.500H20M2 14H20M2 18.500H20M5 2V21M9.500 2V21M14 2V21M18 2V21" stroke="#c2c1c3" /></Ico>],
  ["栅格", false, <Ico><path d="M3 6H19M3 11H19M3 16H19M6.500 3V20M11 3V20M15.500 3V20" stroke="#c2c1c3" strokeWidth="1.400" /></Ico>],
  ["正交", false, <Ico><path d="M4.500 2V19.500H20M5 13H10.500V19" stroke="#9f9ea1" strokeWidth="1.200" /></Ico>],
  ["极轴", false, <Ico><circle cx="9" cy="11" r="7" stroke={W} strokeWidth="1.200" /><path d="M9 11L17 3M9 11H19" stroke={W} strokeWidth="1.200" /></Ico>],
  ["对象捕捉", true, <Ico><rect x="3.500" y="4.500" width="14" height="14" stroke="#c2c1c3" /><path d="M16 2H20V7" stroke={B} /></Ico>],
  ["对象追踪", true, <Ico><path d="M4 18L16 4M4 18.500H20" stroke="#a5a4a7" strokeWidth="1.200" /><rect x="2.500" y="16.500" width="3" height="3" fill="#a5a4a7" /></Ico>],
  ["动态 UCS", false, <Ico><path d="M8.500 3V12H1" stroke={W} strokeWidth="2.400" /><path d="M10 12H20M10.500 12V20" stroke={W} strokeWidth="1.400" /></Ico>],
  ["动态输入", true, <Ico><path d="M6 1V10M2 5.500H10" stroke={W} /><rect x="9" y="9" width="12" height="11" fill={W} /><path d="M11 12.500H19M11 16.500H19" stroke="#555" /></Ico>],
  ["线宽", false, <Ico><path d="M3 5.500H19M3 17.500H19" stroke={W} /><path d="M3 11H19" stroke="#a5a4a7" strokeDasharray="3 1" /></Ico>],
  ["循环选择", false, <Ico><path d="M2 2.500H16" stroke={W} strokeDasharray="1 1" /><path d="M8 5L16 13H12L14 18L12 19L10 14L8 16Z" fill={W} /></Ico>],
  ["图层", false, <Layers><path d="M21 12L17 17H20L18 22L23 16H20Z" fill={B} /></Layers>],
  ["注释监视", false, <Ico><circle cx="10" cy="10" r="8" stroke="#b9c6de" strokeWidth="1.400" /><path d="M5.500 13V7H14.500V13ZM8 9.500H12.500V15" stroke={B} strokeWidth="1.800" /><path d="M15.500 15.500L20 20" stroke={W} strokeWidth="2.400" /></Ico>],
  ["隔离", true, <Ico><rect x="1" y="9" width="13" height="9" fill={B} /><rect x="7" y="4" width="13" height="9" fill={B} stroke={W} strokeWidth="1.600" /></Ico>],
  ["注释比例", false, <Ico><Person /></Ico>],
];

const moreToggles: [string, boolean, React.ReactNode][] = [
  ["注释可见性", false, <Ico><Person /><Bulb x={14} y={1} s={0.55} /></Ico>],
  ["自动缩放", false, <Ico><Person c="#8f8e91" /><path d="M18 1L15 6H18L17 10L21 5H18Z" fill="#9b9a9d" /></Ico>],
  ["透明", true, (
    <Ico>
      <rect x="3" y="3" width="16" height="16" stroke={W} />
      {Array.from({ length: 18 }, (_, i) => <rect key={i} x={4 + (i % 3) * 5 + (Math.floor(i / 3) % 2) * 2.5} y={4 + Math.floor(i / 3) * 2.5} width="2.500" height="2.500" fill={W} />)}
    </Ico>
  )],
  ["快捷特性", false, <Ico><rect x="5" y="3" width="13" height="17" fill={W} /><path d="M7 7H16M7 10.500H16M7 14H16M7 17.500H16M9.500 6V19" stroke="#4a494b" /></Ico>],
  ["清理", true, <Ico><path d="M18 6A8.500 8.500 0 1 0 19.500 12M13 7H19V2M7 11H15M11 7V15" stroke={W} strokeWidth="1.500" /></Ico>],
];

export default function App() {
  return (
    <>
      <GlobalStyle />
      <Shell>
        <RibbonBar />
        <Main>
          <PropertiesPalette />
          <Doc>
            <DocTabs>
              <DocTab>
                cad平面图.dwg
                <IconButton aria-label="关闭图纸"><Ico w={20} h={14}><path d="M2 2L12 12M12 2L2 12" stroke="#a9a8ab" strokeWidth="1.800" /></Ico></IconButton>
              </DocTab>
            </DocTabs>
            <ModelSpace />
            <LayoutTabs>
              <IconButton $w={16} aria-label="第一个"><Ico w={10} h={12}><path d="M1 1V11" stroke="#fff" strokeWidth="1.600" /><path d="M9 1V11L3 6Z" fill="#fff" /></Ico></IconButton>
              <IconButton $w={18} aria-label="上一个"><Ico w={8} h={12}><path d="M7 1V11L1 6Z" fill="#fff" /></Ico></IconButton>
              <IconButton $w={18} aria-label="下一个"><Ico w={8} h={12}><path d="M1 1V11L7 6Z" fill="#fff" /></Ico></IconButton>
              <IconButton $w={18} aria-label="最后一个"><Ico w={10} h={12}><path d="M9 1V11" stroke="#fff" strokeWidth="1.600" /><path d="M1 1V11L7 6Z" fill="#fff" /></Ico></IconButton>
              <LayoutTab $on>模型</LayoutTab>
              <LayoutTab>布局1</LayoutTab>
              <LayoutTab>布局2</LayoutTab>
              <LayoutTab aria-label="新建布局">+</LayoutTab>
            </LayoutTabs>
          </Doc>
        </Main>
        <CommandLog>
          <LogLine>以交叉窗口或交叉多边形选择要拉伸的对象...</LogLine>
          <LogLine>选择对象: 指定对角点: 找到 3 个</LogLine>
          <LogLine>选择对象:</LogLine>
        </CommandLog>
        <CommandRow>
          <LogLine>指定基点或 [位移(D)] &lt;位移&gt;:</LogLine>
          <ScrollEnd>
            <ScrollButton aria-label="向左滚动"><Ico w={8} h={10}><path d="M6 1L2 5L6 9" stroke="#333" strokeWidth="1.800" /></Ico></ScrollButton>
          </ScrollEnd>
        </CommandRow>
        <StatusBar>
          <Coordinates>1170637.25, 205100.64, ...</Coordinates>
          <ToggleGroup $w={353}>
            {toggles.map(([n, on, icon]) => <Toggle key={n} $on={on} aria-label={n}>{icon}</Toggle>)}
          </ToggleGroup>
          <ScaleButton>1:1<MiniCaret /></ScaleButton>
          <ToggleGroup $w={124}>
            {moreToggles.map(([n, on, icon]) => <Toggle key={n} $on={on} aria-label={n}>{icon}</Toggle>)}
          </ToggleGroup>
          <StatusRight>
            <IconButton $w={24} aria-label="设置"><Gear /></IconButton>
            <IconButton $w={24} aria-label="锁定界面"><Ico w={18} h={18}><Lock x={1} y={1} c={B} /></Ico></IconButton>
            <IconButton $w={24} aria-label="提示"><Ico w={12} h={18}><Bulb x={0} y={0} /></Ico></IconButton>
            <IconButton $w={24} aria-label="硬件加速">
              <Ico w={20} h={18}><rect x="1" y="3" width="12" height="9" fill={B} /><path d="M3.500 1V14M7 1V14M10.500 1V14" stroke={B} strokeWidth="1.500" /><circle cx="13" cy="11" r="4.500" stroke={W} strokeWidth="1.500" fill="#49484a" /><path d="M16 14L19 17" stroke={W} strokeWidth="1.800" /></Ico>
            </IconButton>
          </StatusRight>
        </StatusBar>
        <Caption>欢迎转发，关注，后面持续更新功能讲解，喜欢的朋友请留言！</Caption>
      </Shell>
    </>
  );
}
